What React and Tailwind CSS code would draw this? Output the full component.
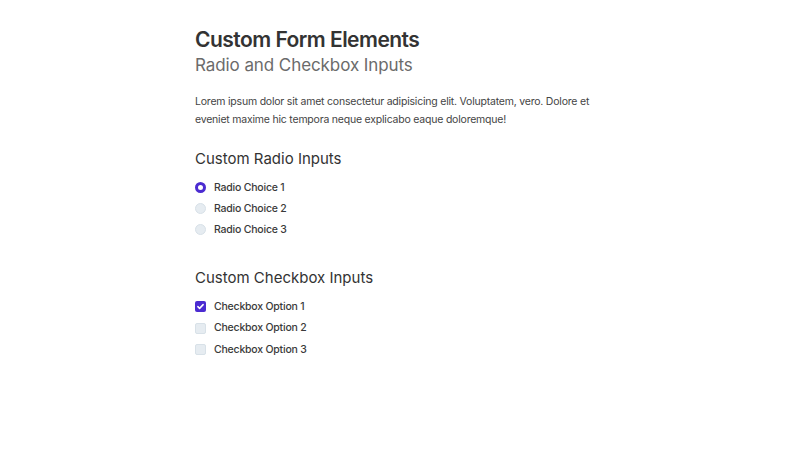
import React, { useState } from 'react';

const radios = ['Radio Choice 1', 'Radio Choice 2', 'Radio Choice 3'];
const checks = ['Checkbox Option 1', 'Checkbox Option 2', 'Checkbox Option 3'];

export default function App() {
  const [radio, setRadio] = useState(0);
  const [checked, setChecked] = useState([true, false, false]);

  return (
    <div className="min-h-screen bg-white font-['Inter',sans-serif] text-[#333]">
      <div className="mx-auto w-[410px] pt-[27px]">
        {/* Header */}
        <h1 className="text-[21px] font-semibold leading-[26px] tracking-[-0.025em] text-[#333]">Custom Form Elements</h1>
        <h2 className="text-[17px] leading-[24px] tracking-[-0.005em] text-[#6b6b6b]">Radio and Checkbox Inputs</h2>
        <p className="mt-[16px] text-[10.5px] leading-[18px] tracking-[-0.02em] text-[#444]">
          Lorem ipsum dolor sit amet consectetur adipisicing elit. Voluptatem, vero. Dolore et eveniet maxime hic
          tempora neque explicabo eaque doloremque!
        </p>

        {/* Radios */}
        <h3 className="mt-[20px] text-[15px] leading-[20px] text-[#333]">Custom Radio Inputs</h3>
        <div className="mt-[8px] flex flex-col">
          {radios.map((r, i) => (
            <label
              key={r}
              className="flex h-[21px] items-center gap-[8px] text-[10.5px] font-medium tracking-[-0.02em] text-[#3a3a3a]"
              onClick={() => setRadio(i)}
            >
              {radio === i ? (
                <span className="h-[11px] w-[11px] rounded-full border-[3px] border-[#4b2bd1] bg-white" />
              ) : (
                <span className="h-[11px] w-[11px] rounded-full border border-[#d8e1e8] bg-[#e6ecf1]" />
              )}
              {r}
            </label>
          ))}
        </div>

        {/* Checkboxes */}
        <h3 className="mt-[28px] text-[15px] leading-[20px] text-[#333]">Custom Checkbox Inputs</h3>
        <div className="mt-[8px] flex flex-col">
          {checks.map((c, i) => (
            <label
              key={c}
              className="flex h-[21.5px] items-center gap-[8px] text-[10.5px] font-medium tracking-[-0.02em] text-[#3a3a3a]"
              onClick={() => setChecked(checked.map((v, j) => (j === i ? !v : v)))}
            >
              {checked[i] ? (
                <span className="flex h-[11px] w-[11px] items-center justify-center rounded-[2px] bg-[#4b2bd1]">
                  <svg viewBox="0 0 12 12" className="h-[9px] w-[9px]" fill="none" stroke="white" strokeWidth="2" strokeLinecap="round" strokeLinejoin="round">
                    <path d="M2.5 6.2l2.3 2.3 4.7-5" />
                  </svg>
                </span>
              ) : (
                <span className="h-[11px] w-[11px] rounded-[2px] border border-[#d8e1e8] bg-[#e6ecf1]" />
              )}
              {c}
            </label>
          ))}
        </div>
      </div>
    </div>
  );
}
